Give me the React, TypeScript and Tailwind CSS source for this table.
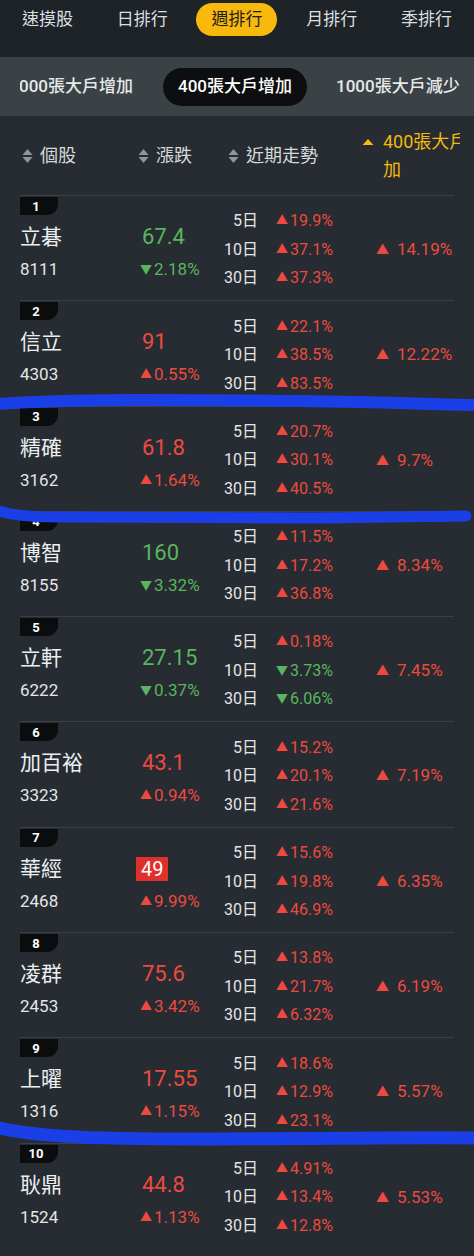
import React from "react";

type Period = { v: string; up: boolean };
type Stock = {
  rank: number;
  name: string;
  code: string;
  price: string;
  change: string;
  up: boolean;
  limit?: boolean;
  periods: Period[];
  holder: string;
};

const u = (v: string): Period => ({ v, up: true });
const d = (v: string): Period => ({ v, up: false });

const stocks: Stock[] = [
  { rank: 1, name: "立碁", code: "8111", price: "67.4", change: "2.18%", up: false, periods: [u("19.9%"), u("37.1%"), u("37.3%")], holder: "14.19%" },
  { rank: 2, name: "信立", code: "4303", price: "91", change: "0.55%", up: true, periods: [u("22.1%"), u("38.5%"), u("83.5%")], holder: "12.22%" },
  { rank: 3, name: "精確", code: "3162", price: "61.8", change: "1.64%", up: true, periods: [u("20.7%"), u("30.1%"), u("40.5%")], holder: "9.7%" },
  { rank: 4, name: "博智", code: "8155", price: "160", change: "3.32%", up: false, periods: [u("11.5%"), u("17.2%"), u("36.8%")], holder: "8.34%" },
  { rank: 5, name: "立軒", code: "6222", price: "27.15", change: "0.37%", up: false, periods: [u("0.18%"), d("3.73%"), d("6.06%")], holder: "7.45%" },
  { rank: 6, name: "加百裕", code: "3323", price: "43.1", change: "0.94%", up: true, periods: [u("15.2%"), u("20.1%"), u("21.6%")], holder: "7.19%" },
  { rank: 7, name: "華經", code: "2468", price: "49", change: "9.99%", up: true, limit: true, periods: [u("15.6%"), u("19.8%"), u("46.9%")], holder: "6.35%" },
  { rank: 8, name: "凌群", code: "2453", price: "75.6", change: "3.42%", up: true, periods: [u("13.8%"), u("21.7%"), u("6.32%")], holder: "6.19%" },
  { rank: 9, name: "上曜", code: "1316", price: "17.55", change: "1.15%", up: true, periods: [u("18.6%"), u("12.9%"), u("23.1%")], holder: "5.57%" },
  { rank: 10, name: "耿鼎", code: "1524", price: "44.8", change: "1.13%", up: true, periods: [u("4.91%"), u("13.4%"), u("12.8%")], holder: "5.53%" },
];

const labels = ["5日", "10日", "30日"];
const tabs = ["速摸股", "日排行", "週排行", "月排行", "季排行"];

const Arrow = ({ up }: { up: boolean }) => (
  <span className="inline-block text-[12px] mr-[2px] align-[1px]">{up ? "▲" : "▼"}</span>
);

const SortIcon = () => (
  <svg width="11" height="16" viewBox="0 0 11 16" className="mr-[7px] shrink-0">
    <path d="M5.5 1 L10.5 7 H0.5 Z" fill="#8e959b" />
    <path d="M5.5 15 L10.5 9 H0.5 Z" fill="#8e959b" />
  </svg>
);

const Row = ({ s }: { s: Stock }) => {
  const color = s.up ? "text-[#ec4a40]" : "text-[#5ab55e]";
  return (
    <div className="mx-[20px] h-[105.3px] border-t border-[#394046] flex">
      <div className="w-[120px] shrink-0 flex flex-col">
        <div className="mt-[1px] w-[38px] h-[18px] bg-[#0b0c0d] rounded-br-[11px] flex items-center justify-center pr-[6px] text-[13px] font-bold text-white leading-none">
          {s.rank}
        </div>
        <div className="mt-[8px] leading-[28px] text-[21px] text-[#eceff1]">{s.name}</div>
        <div className="mt-[6px] leading-[24px] text-[17px] text-[#e3e6e8]">{s.code}</div>
      </div>
      <div className="w-[82px] shrink-0 flex flex-col pt-[27px]">
        {s.limit ? (
          <div className="h-[28px] flex items-center">
            <span className="-ml-[4px] bg-[#e0302b] text-white text-[20px] leading-[24px] px-[5px]">{s.price}</span>
          </div>
        ) : (
          <div className={`leading-[28px] text-[22px] ml-[2px] ${color}`}>{s.price}</div>
        )}
        <div className={`mt-[6px] leading-[24px] text-[17px] whitespace-nowrap ${s.limit ? "text-[#ec4a40]" : color}`}>
          <Arrow up={s.up} />
          {s.change}
        </div>
      </div>
      <div className="w-[154px] shrink-0 pt-[11px] flex flex-col">
        {s.periods.map((p, i) => (
          <div key={i} className="h-[28.5px] flex items-center">
            <span className="w-[36px] text-right text-[16px] text-[#e3e6e8]">{labels[i]}</span>
            <span className={`ml-[18px] text-[16px] ${p.up ? "text-[#ec4a40]" : "text-[#5ab55e]"}`}>
              <Arrow up={p.up} />
              {p.v}
            </span>
          </div>
        ))}
      </div>
      <div className="flex-1 pt-[39px]">
        <div className="leading-[28px] text-[17px] text-[#ec4a40] whitespace-nowrap">
          <span className="text-[13px] mr-[8px] align-[1px]">▲</span>
          {s.holder}
        </div>
      </div>
    </div>
  );
};

export default function App() {
  return (
    <div
      className="relative w-[474px] h-[1256px] overflow-hidden bg-[#262c31]"
      style={{ fontFamily: "Roboto, 'Noto Sans CJK TC', sans-serif" }}
    >
      <div className="h-[57px] bg-[#1d2327] grid grid-cols-5 items-start pt-[3px]">
        {tabs.map((t) => (
          <div key={t} className="h-[33px] flex items-center justify-center">
            {t === "週排行" ? (
              <span className="h-[33px] px-[15px] rounded-full bg-[#f8b90c] text-[#1c1c1c] text-[17px] flex items-center">
                {t}
              </span>
            ) : (
              <span className="text-[17px] text-[#dcdfe1]">{t}</span>
            )}
          </div>
        ))}
      </div>

      <div className="h-[59px] bg-[#3b4246] flex items-center">
        <div className="ml-[20px] w-[440px] overflow-hidden flex items-center text-[17px] font-medium whitespace-nowrap">
          <div className="w-[113px] shrink-0 flex justify-end text-[#e6e8ea]">
            <span className="shrink-0">1000張大戶增加</span>
          </div>
          <span className="shrink-0 ml-[30px] px-[15px] h-[38px] flex items-center rounded-full bg-[#0d0e0f] text-white">
            400張大戶增加
          </span>
          <span className="shrink-0 ml-[29px] text-[#e6e8ea]">1000張大戶減少</span>
        </div>
      </div>

      <div className="w-[460px] h-[79px] overflow-hidden flex items-center text-[18px] text-[#d6d9db]">
        <div className="w-[138px] shrink-0 pl-[22px] flex items-center">
          <SortIcon />
          個股
        </div>
        <div className="w-[90px] shrink-0 flex items-center">
          <SortIcon />
          漲跌
        </div>
        <div className="w-[134px] shrink-0 flex items-center">
          <SortIcon />
          近期走勢
        </div>
        <div className="flex items-start shrink-0">
          <svg width="12" height="8" viewBox="0 0 12 8" className="mt-[10px] mr-[9px] shrink-0">
            <path d="M6 1 L11.5 7 H0.5 Z" fill="#f5b90f" />
          </svg>
          <div className="flex flex-col leading-[28px] text-[18px] text-[#f5b90f]">
            <span className="whitespace-nowrap">400張大戶增</span>
            <span>加</span>
          </div>
        </div>
      </div>

      {stocks.map((s) => (
        <Row key={s.rank} s={s} />
      ))}

      <svg className="absolute inset-0 pointer-events-none" width="474" height="1256" viewBox="0 0 474 1256">
        <path d="M -5 404 C 80 398, 200 400, 300 401 S 440 405, 480 405" stroke="#1b3fe6" strokeWidth="12" fill="none" strokeLinecap="round" />
        <path d="M -5 510 C 10 514, 20 517, 60 517 L 300 518 C 380 518, 440 516, 466 516" stroke="#1b3fe6" strokeWidth="11" fill="none" strokeLinecap="round" />
        <path d="M -5 1127 C 30 1136, 80 1139, 200 1139 S 400 1137, 480 1138" stroke="#1b3fe6" strokeWidth="13" fill="none" strokeLinecap="round" />
      </svg>
    </div>
  );
}
